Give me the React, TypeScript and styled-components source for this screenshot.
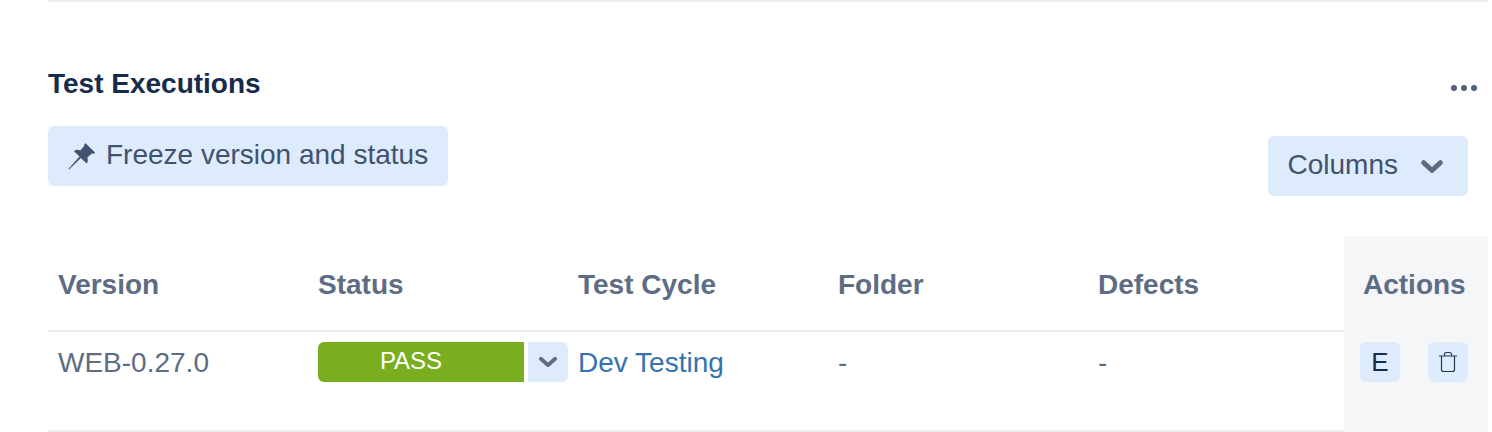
import React from "react";
import styled, { createGlobalStyle } from "styled-components";

const Global = createGlobalStyle`
  html, body { margin: 0; padding: 0; background: #fff; }
  body { font-family: "Liberation Sans", Arial, sans-serif; }
`;

const Page = styled.div`
  width: 1492px;
  height: 432px;
  overflow: hidden;
  box-sizing: border-box;
  padding: 0 4px 0 48px;
`;
const TopRule = styled.div`
  height: 2px;
  background: #ebecf0;
`;
const TitleRow = styled.div`
  display: flex;
  justify-content: space-between;
  align-items: flex-start;
  height: 56px;
  margin-top: 68px;
`;
const Title = styled.h2`
  margin: 0;
  font-size: 28px;
  line-height: 28px;
  font-weight: 700;
  color: #172b4d;
`;
const More = styled.svg`
  width: 26px;
  height: 6px;
  margin: 15px 11px 0 0;
  fill: #505f79;
`;
const Toolbar = styled.div`
  display: flex;
  justify-content: space-between;
  align-items: flex-start;
  height: 110px;
  padding-right: 20px;
`;
const Button = styled.button<{ $top?: number }>`
  display: flex;
  align-items: center;
  height: 60px;
  margin-top: ${(p) => p.$top ?? 0}px;
  border: 0;
  border-radius: 6px;
  background: #deebfd;
  color: #42526e;
  font: 28px/32px "Liberation Sans", Arial, sans-serif;
  padding: 0 20px 2px;
`;
const PinIcon = styled.svg`
  width: 28px;
  height: 28px;
  margin: 2px 10px 0 0;
  fill: #42526e;
`;
const ChevronIcon = styled.svg<{ $size: number }>`
  width: ${(p) => p.$size}px;
  height: ${(p) => Math.round(p.$size * 0.62)}px;
  fill: none;
  stroke: #5e6b83;
  stroke-width: 4;
  stroke-linecap: round;
  stroke-linejoin: round;
`;
const ColumnsChevron = styled.span`
  display: flex;
  margin: 2px 4px 0 22px;
`;
const Table = styled.div`
  display: grid;
  grid-template-columns: 260px 260px 260px 260px 256px 144px;
  grid-template-rows: 96px 100px;
`;
const HeadCell = styled.div`
  display: flex;
  align-items: center;
  box-sizing: border-box;
  padding: 4px 10px 0;
  border-bottom: 2px solid #ebecf0;
  font-size: 28px;
  font-weight: 700;
  color: #5e6c84;
`;
const ActionsHead = styled(HeadCell)`
  border-bottom: 0;
  background: #f5f6f8;
  padding: 2px 0 0 19px;
`;
const Cell = styled.div`
  display: flex;
  align-items: flex-start;
  box-sizing: border-box;
  padding: 13px 10px 0;
  border-bottom: 2px solid #ebecf0;
  font-size: 28px;
  line-height: 32px;
  color: #5e6c84;
`;
const TextValue = styled.span`
  margin-top: 2px;
`;
const StatusCell = styled(Cell)`
  padding-right: 0;
  padding-top: 10px;
`;
const StatusBadge = styled.div`
  box-sizing: border-box;
  width: 206px;
  height: 40px;
  padding-right: 20px;
  border-radius: 6px 0 0 6px;
  background: #79ae20;
  color: #fff;
  font-size: 24px;
  line-height: 38px;
  text-align: center;
`;
const StatusToggle = styled.div`
  display: flex;
  align-items: center;
  justify-content: center;
  width: 40px;
  height: 40px;
  margin-left: 4px;
  border-radius: 0 6px 6px 0;
  background: #deebfd;
`;
const CycleLink = styled.a`
  margin-top: 2px;
  color: #3572b0;
  text-decoration: none;
`;
const ActionsCell = styled.div`
  display: flex;
  align-items: flex-start;
  gap: 28px;
  box-sizing: border-box;
  padding: 10px 0 0 16px;
  background: #f5f6f8;
`;
const IconButton = styled.div`
  display: flex;
  align-items: center;
  justify-content: center;
  width: 40px;
  height: 40px;
  border-radius: 6px;
  background: #deebfd;
  color: #172b4d;
  font-size: 26px;
`;
const TrashIcon = styled.svg`
  width: 20px;
  height: 22px;
  fill: none;
  stroke: #253858;
  stroke-width: 1.2;
`;

const Chevron = ({ size }: { size: number }) => (
  <ChevronIcon $size={size} viewBox="0 0 20 12.4" preserveAspectRatio="none">
    <path d="M3 3 L10 9.4 L17 3" />
  </ChevronIcon>
);

export default function App() {
  return (
    <Page>
      <Global />
      <TopRule />
      <TitleRow>
        <Title>Test Executions</Title>
        <More viewBox="0 0 26 6">
          <circle cx="3" cy="3" r="3" />
          <circle cx="13" cy="3" r="3" />
          <circle cx="23" cy="3" r="3" />
        </More>
      </TitleRow>
      <Toolbar>
        <Button>
          <PinIcon viewBox="0 0 28 28">
            <path d="M17.6 1.2 L27 10.4 L25.6 11.9 C24.8 11.5 24 11.5 23.3 12 L19.3 15.6 C20.3 17.8 20 20 18.6 21.6 L12.9 15.9 L1 27.5 L0.4 27 L11.5 14.5 L6 9.2 C7.8 7.6 10 7.4 12.2 8.4 L16 4.3 C16.4 3.7 16.4 3.1 16.1 2.6 Z" />
          </PinIcon>
          Freeze version and status
        </Button>
        <Button $top={10}>
          Columns
          <ColumnsChevron>
            <Chevron size={24} />
          </ColumnsChevron>
        </Button>
      </Toolbar>
      <Table>
        <HeadCell>Version</HeadCell>
        <HeadCell>Status</HeadCell>
        <HeadCell>Test Cycle</HeadCell>
        <HeadCell>Folder</HeadCell>
        <HeadCell>Defects</HeadCell>
        <ActionsHead>Actions</ActionsHead>
        <Cell><TextValue>WEB-0.27.0</TextValue></Cell>
        <StatusCell>
          <StatusBadge>PASS</StatusBadge>
          <StatusToggle><Chevron size={20} /></StatusToggle>
        </StatusCell>
        <Cell><CycleLink href="#">Dev Testing</CycleLink></Cell>
        <Cell><TextValue>-</TextValue></Cell>
        <Cell><TextValue>-</TextValue></Cell>
        <ActionsCell>
          <IconButton>E</IconButton>
          <IconButton>
            <TrashIcon viewBox="0 0 20 22">
              <path d="M1 5 H19 M3.5 5 V18.5 Q3.5 20.5 5.5 20.5 H14.5 Q16.5 20.5 16.5 18.5 V5 M6.5 5 V3.5 Q6.5 1.5 8.5 1.5 H11.5 Q13.5 1.5 13.5 3.5 V5" />
            </TrashIcon>
          </IconButton>
        </ActionsCell>
      </Table>
    </Page>
  );
}
